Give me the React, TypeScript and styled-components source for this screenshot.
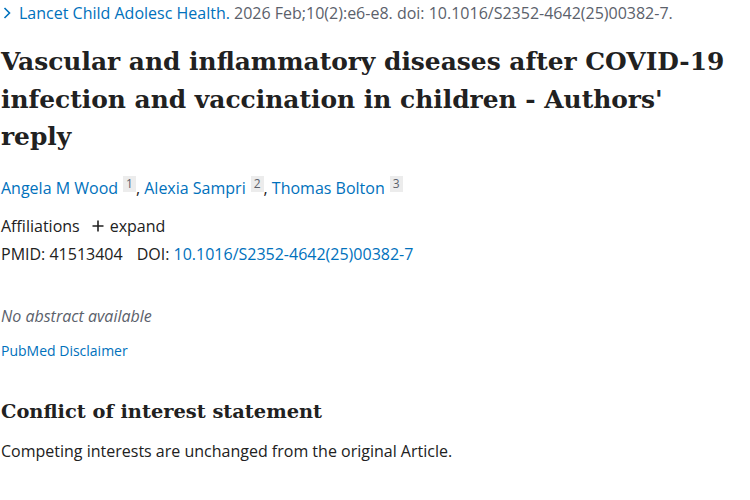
import React from "react";
import styled, { createGlobalStyle } from "styled-components";

const GlobalStyle = createGlobalStyle`
  body {
    margin: 0;
    background: #ffffff;
    font-family: "Open Sans", "Noto Sans", sans-serif;
    color: #212121;
  }
`;

const Page = styled.main`
  padding: 2px 0 0 1px;
  font-size: 16px;
  line-height: 24px;
`;

const Citation = styled.div`
  display: flex;
  align-items: center;
  gap: 8px;
  padding-left: 2px;
  line-height: 22px;
  color: #5b616b;
`;

const Link = styled.a`
  color: #0071bc;
  text-decoration: none;
  cursor: pointer;
`;

const Title = styled.h1`
  max-width: 735px;
  margin: 19px 0 0;
  font-family: "DejaVu Serif", "Liberation Serif", serif;
  font-weight: 700;
  font-size: 24.9px;
  line-height: 37.5px;
  color: #212121;
`;

const Authors = styled.div`
  margin-top: 20px;
`;

const Sup = styled.sup`
  display: inline-block;
  margin-left: 5px;
  padding: 0 3px;
  background: #ececec;
  color: #5b616b;
  font-size: 12px;
  line-height: 16px;
  vertical-align: 6px;
`;

const Row = styled.div<{ $top: number; $gap: number }>`
  display: flex;
  align-items: center;
  gap: ${(p) => p.$gap}px;
  margin-top: ${(p) => p.$top}px;
`;

const Expand = styled.span`
  display: inline-flex;
  align-items: center;
  gap: 6px;
`;

const Italic = styled.p`
  margin: 38px 0 0;
  font-style: italic;
  color: #5b616b;
`;

const Small = styled.div`
  margin-top: 13px;
  font-size: 14px;
  line-height: 20px;
`;

const SubHeading = styled.h2`
  margin: 37px 0 0;
  font-family: "DejaVu Serif", "Liberation Serif", serif;
  font-weight: 700;
  font-size: 19.4px;
  line-height: 28px;
`;

const Para = styled.p`
  margin: 13px 0 0;
`;

const Chevron = () => (
  <svg width="8" height="12" viewBox="0 0 8 12" fill="none">
    <path d="M1.5 1 L6.5 6 L1.5 11" stroke="#0071bc" strokeWidth="1.6" />
  </svg>
);

const Plus = () => (
  <svg width="12" height="12" viewBox="0 0 12 12">
    <path d="M6 0.5 V11.5 M0.5 6 H11.5" stroke="#212121" strokeWidth="1.6" />
  </svg>
);

export default function App() {
  return (
    <>
      <GlobalStyle />
      <Page>
        <Citation>
          <Chevron />
          <span>
            <Link>Lancet Child Adolesc Health.</Link> 2026 Feb;10(2):e6-e8. doi:
            10.1016/S2352-4642(25)00382-7.
          </span>
        </Citation>
        <Title>
          Vascular and inflammatory diseases after COVID-19 infection and
          vaccination in children - Authors' reply
        </Title>
        <Authors>
          <Link>Angela M Wood</Link>
          <Sup>1</Sup>, <Link>Alexia Sampri</Link>
          <Sup>2</Sup>, <Link>Thomas Bolton</Link>
          <Sup>3</Sup>
        </Authors>
        <Row $top={14} $gap={12}>
          <span>Affiliations</span>
          <Expand>
            <Plus /> expand
          </Expand>
        </Row>
        <Row $top={4} $gap={14}>
          <span>PMID: 41513404</span>
          <span>
            DOI: <Link>10.1016/S2352-4642(25)00382-7</Link>
          </span>
        </Row>
        <Italic>No abstract available</Italic>
        <Small>
          <Link>PubMed Disclaimer</Link>
        </Small>
        <SubHeading>Conflict of interest statement</SubHeading>
        <Para>Competing interests are unchanged from the original Article.</Para>
      </Page>
    </>
  );
}
